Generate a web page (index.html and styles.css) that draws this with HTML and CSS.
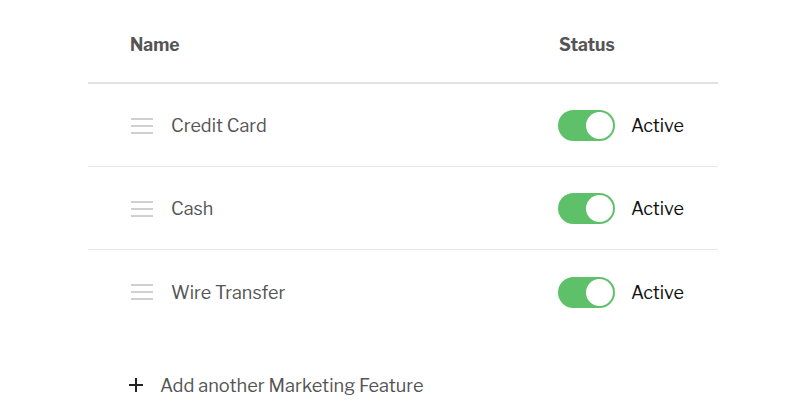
FILE: index.html
```html
<!DOCTYPE html>
<html>
<head>
<meta charset="utf-8">
<link rel="stylesheet" href="styles.css">
</head>
<body>
<div class="table">
  <div class="head">
    <div class="col-name">Name</div>
    <div class="col-status">Status</div>
  </div>
  <div class="row">
    <div class="col-name"><span class="handle"><i></i><i></i><i></i></span><span class="label">Credit Card</span></div>
    <div class="col-status"><span class="toggle"><span class="knob"></span></span><span class="state">Active</span></div>
  </div>
  <div class="row">
    <div class="col-name"><span class="handle"><i></i><i></i><i></i></span><span class="label">Cash</span></div>
    <div class="col-status"><span class="toggle"><span class="knob"></span></span><span class="state">Active</span></div>
  </div>
  <div class="row last">
    <div class="col-name"><span class="handle"><i></i><i></i><i></i></span><span class="label">Wire Transfer</span></div>
    <div class="col-status"><span class="toggle"><span class="knob"></span></span><span class="state">Active</span></div>
  </div>
  <div class="add">
    <svg class="plus" width="16" height="16" viewBox="0 0 16 16"><path d="M8 1v14M1 8h14" stroke="#222" stroke-width="2"/></svg>
    <span>Add another Marketing Feature</span>
  </div>
</div>
</body>
</html>
```
FILE: styles.css
```css
html, body { margin: 0; padding: 0; background: #fff; overflow: hidden; }
body { font-family: "Libre Franklin", "Liberation Sans", Arial, sans-serif; }
.table { width: 630px; margin-left: 88px; }
.head { display: flex; align-items: center; height: 84px; padding-top: 6px; border-bottom: 2px solid #e2e2e2; box-sizing: border-box; font-weight: bold; font-size: 17.5px; color: #555; }
.head .col-name { padding-left: 42px; width: 471px; box-sizing: border-box; }
.row { display: flex; align-items: center; height: 83px; padding-top: 1px; border-bottom: 1px solid #e8e8e8; box-sizing: border-box; font-size: 18px; }
.row.last { border-bottom: none; }
.row .col-name { display: flex; align-items: center; width: 470px; padding-left: 43px; box-sizing: border-box; }
.handle { display: flex; flex-direction: column; gap: 5px; width: 22px; margin-right: 18px; }
.handle i { display: block; height: 2px; background: #d0d0d0; }
.label { color: #555; }
.col-status { display: flex; align-items: center; }
.toggle { width: 57px; height: 31px; border-radius: 16px; background: #5ec16a; position: relative; margin-right: 16px; }
.knob { position: absolute; right: 2px; top: 2px; width: 27px; height: 27px; border-radius: 50%; background: #fff; }
.state { color: #111; }
.add { display: flex; align-items: center; height: 80px; padding-top: 24px; padding-left: 40px; box-sizing: border-box; font-size: 18.2px; color: #555; }
.plus { margin-right: 16px; }
```
